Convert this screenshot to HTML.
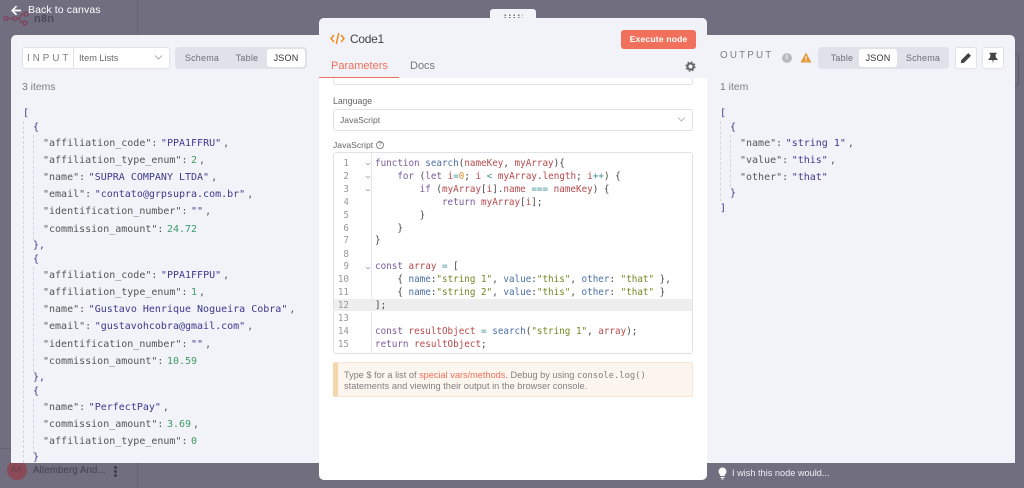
<!DOCTYPE html>
<html><head><meta charset="utf-8"><style>
*{box-sizing:border-box}
html,body{margin:0;padding:0;width:1024px;height:488px;overflow:hidden;background:#706e7f}
body{position:relative;font-family:"Liberation Sans",sans-serif;color:#555}
.a{position:absolute;white-space:nowrap}
.j{position:absolute;white-space:pre;font:10px/14px "DejaVu Sans Mono",monospace;color:#555;letter-spacing:0}
.s{color:#3b3a8f;margin:0 2px 0 -2.5px}.n{color:#3f9a68;margin:0 2px 0 -2.5px}.b{color:#3b3a8f}
.c{position:absolute;left:375px;white-space:pre;font:9.27px/13px "DejaVu Sans Mono",monospace;color:#444}
.l{position:absolute;left:333px;width:16px;text-align:right;white-space:pre;font:9.27px/13px "DejaVu Sans Mono",monospace;color:#999}
.k{color:#7a5a9e}.v{color:#b8484a}.f{color:#4a6ea5}.t{color:#6f8a20}.o{color:#d9922e}.p{color:#3f8f99}
.d{position:absolute;width:0;border-left:1px dashed #cdd6e0}
.seg{position:absolute;background:#dfe2e9;border-radius:4px;height:22px;top:47px}
.seg span{position:absolute;top:3px;height:16px;font-size:9px;line-height:16px;text-align:center;color:#6f6f78;letter-spacing:.2px}
.seg .on{background:#fff;border-radius:3px;color:#333;top:2px;height:18px;line-height:18px}
.fold{position:absolute;left:365px;width:6px;height:6px}
</style></head><body>

<!-- background canvas bits -->
<div class="a" style="left:137px;top:0;width:1px;height:488px;background:#666474"></div>
<div class="a" style="left:0;top:448px;width:137px;height:1px;background:#666474"></div>
<div class="a" style="left:1015px;top:53px;width:4px;height:33px;border:1px solid #5c5a6a;border-left:0;border-radius:0 3px 3px 0"></div>

<svg class="a" style="left:2px;top:8px" width="30" height="20" viewBox="0 0 30 20" fill="none" stroke="#7d4a63" stroke-width="1.6">
<circle cx="4" cy="10.500" r="2"/><circle cx="13" cy="10.500" r="2"/><circle cx="24" cy="6" r="2"/><circle cx="23" cy="15" r="2"/>
<path d="M6 10.500h5M15 10.500h1.500c2 0 1.500-4.500 5.500-4.500M16.500 10.500c2 0 1 4.500 4.500 4.500"/></svg>
<div class="a" style="left:34px;top:13px;font-size:11px;font-weight:bold;color:#4c4a58;letter-spacing:.3px">n8n</div>
<svg class="a" style="left:10px;top:4px" width="13" height="13" viewBox="0 0 13 13" fill="none" stroke="#fff" stroke-width="1.700"><path d="M11 6.500H2.500M6.500 2.200L2.200 6.500l4.300 4.300"/></svg>
<div class="a" style="left:28px;top:4px;font-size:10.500px;line-height:13px;color:#fff;letter-spacing:.1px">Back to canvas</div>

<div class="a" style="left:7px;top:460px;width:20px;height:20px;border-radius:50%;background:#8a4a58"></div>
<div class="a" style="left:11px;top:465px;font-size:8px;color:#6d3a48">AA</div>
<div class="a" style="left:33px;top:465px;font-size:9.800px;color:#45434f">Altemberg And...</div>
<div class="a" style="left:114px;top:466px;width:3px;height:3px;border-radius:50%;background:#3d3b47;box-shadow:0 4px 0 #3d3b47,0 8px 0 #3d3b47"></div>

<svg class="a" style="left:717px;top:467px" width="11" height="13" viewBox="0 0 11 13" fill="#fff"><path d="M5.500.500a4 4 0 0 0-2.300 7.200V9h4.600V7.700A4 4 0 0 0 5.500.500zM3.600 10h3.800v1H3.600zM4.400 11.500h2.200v1H4.400z"/></svg>
<div class="a" style="left:732px;top:467px;font-size:9.200px;line-height:13px;color:#f0f0f4">I wish this node would...</div>

<!-- LEFT PANEL -->
<div class="a" style="left:11px;top:35px;width:320px;height:428px;background:#f2f3f8;border-radius:5px 0 0 0"></div>
<div class="a" style="left:22px;top:47px;width:148px;height:22px;background:#fff;border:1px solid #dfe2e9;border-radius:3px"></div>
<div class="a" style="left:73px;top:48px;width:1px;height:20px;background:#dfe2e9"></div>
<div class="a" style="left:27px;top:52px;font-size:9.800px;line-height:14px;letter-spacing:3px;color:#7c7c85;background:transparent">INPUT</div>
<div class="a" style="left:79px;top:51px;font-size:9.200px;line-height:14px;color:#666">Item Lists</div>
<svg class="a" style="left:154px;top:54px" width="9" height="7" viewBox="0 0 9 7" fill="none" stroke="#999" stroke-width=".8"><path d="M1 1.500l3.500 3.500L8 1.500"/></svg>
<div class="seg" style="left:175px;width:132px"><span style="left:4px;width:46px">Schema</span><span style="left:50px;width:44px">Table</span><span class="on" style="left:92px;width:38px">JSON</span></div>
<div class="a" style="left:22px;top:81px;font-size:10.400px;line-height:14px;color:#7c7c85">3 items</div>

<div class="d" style="left:23px;top:121px;height:342px"></div>
<div class="d" style="left:33px;top:135px;height:105px"></div>
<div class="d" style="left:33px;top:267px;height:105px"></div>
<div class="d" style="left:33px;top:399px;height:55px"></div>

<div class="j b" style="left:23px;top:107px">[</div>
<div class="j b" style="left:33px;top:121px">{</div>
<div class="j" style="left:43px;top:137px">"affiliation_code": <span class="s">"PPA1FFRU"</span>,</div>
<div class="j" style="left:43px;top:154px">"affiliation_type_enum": <span class="n">2</span>,</div>
<div class="j" style="left:43px;top:171px">"name": <span class="s">"SUPRA COMPANY LTDA"</span>,</div>
<div class="j" style="left:43px;top:188px">"email": <span class="s">"contato@grpsupra.com.br"</span>,</div>
<div class="j" style="left:43px;top:205px">"identification_number": <span class="s">""</span>,</div>
<div class="j" style="left:43px;top:223px">"commission_amount": <span class="n">24.72</span></div>
<div class="j b" style="left:33px;top:239px">},</div>
<div class="j b" style="left:33px;top:253px">{</div>
<div class="j" style="left:43px;top:269px">"affiliation_code": <span class="s">"PPA1FFPU"</span>,</div>
<div class="j" style="left:43px;top:286px">"affiliation_type_enum": <span class="n">1</span>,</div>
<div class="j" style="left:43px;top:303px">"name": <span class="s">"Gustavo Henrique Nogueira Cobra"</span>,</div>
<div class="j" style="left:43px;top:320px">"email": <span class="s">"gustavohcobra@gmail.com"</span>,</div>
<div class="j" style="left:43px;top:338px">"identification_number": <span class="s">""</span>,</div>
<div class="j" style="left:43px;top:355px">"commission_amount": <span class="n">10.59</span></div>
<div class="j b" style="left:33px;top:371px">},</div>
<div class="j b" style="left:33px;top:385px">{</div>
<div class="j" style="left:43px;top:401px">"name": <span class="s">"PerfectPay"</span>,</div>
<div class="j" style="left:43px;top:418px">"commission_amount": <span class="n">3.69</span>,</div>
<div class="j" style="left:43px;top:435px">"affiliation_type_enum": <span class="n">0</span></div>
<div class="j b" style="left:33px;top:451px;height:12px;overflow:hidden">}</div>

<!-- RIGHT PANEL -->
<div class="a" style="left:700px;top:35px;width:315px;height:428px;background:#f2f3f8;border-radius:0 5px 0 0"></div>
<div class="a" style="left:720px;top:49px;font-size:9.800px;line-height:14px;letter-spacing:2.200px;color:#7c7c85">OUTPUT</div>
<div class="a" style="left:782px;top:53px;width:10px;height:10px;border-radius:50%;background:#b9b9c0;color:#fff;font-size:7px;line-height:10px;text-align:center;font-weight:bold">i</div>
<svg class="a" style="left:800px;top:52px" width="12" height="11" viewBox="0 0 12 11"><path d="M6 .500L11.500 10.500H.500z" fill="#e39a3d"/><path d="M6 4v3.500M6 8.300v1" stroke="#fff" stroke-width="1"/></svg>
<div class="seg" style="left:818px;width:131px"><span style="left:4px;width:40px">Table</span><span class="on" style="left:41px;width:38px">JSON</span><span style="left:81px;width:48px">Schema</span></div>
<div class="a" style="left:955px;top:47px;width:22px;height:22px;background:#fff;border:1px solid #dfe2e9;border-radius:3px"></div>
<div class="a" style="left:982px;top:47px;width:22px;height:22px;background:#fff;border:1px solid #dfe2e9;border-radius:3px"></div>
<svg class="a" style="left:960px;top:52px" width="12" height="12" viewBox="0 0 12 12" fill="#444"><path d="M8.300 1L11 3.700 4 10.700.800 11.200 1.300 8z"/></svg>
<svg class="a" style="left:987px;top:52px" width="12" height="12" viewBox="0 0 12 12" fill="#444"><path d="M2.500.800h7v1.400H8.500l.4 3.300 1.600 1.500v1H6.600L6 11.500 5.400 8H1.500V7l1.600-1.500.4-3.300h-1z"/></svg>
<div class="a" style="left:720px;top:81px;font-size:10.400px;line-height:14px;color:#7c7c85">1 item</div>

<div class="d" style="left:720px;top:121px;height:80px;border-color:#d5d6da"></div>
<div class="d" style="left:730px;top:135px;height:52px;border-color:#d5d6da"></div>
<div class="j b" style="left:720px;top:107px">[</div>
<div class="j b" style="left:730px;top:121px">{</div>
<div class="j" style="left:740px;top:137px">"name": <span class="s">"string 1"</span>,</div>
<div class="j" style="left:740px;top:154px">"value": <span class="s">"this"</span>,</div>
<div class="j" style="left:740px;top:171px">"other": <span class="s">"that"</span></div>
<div class="j b" style="left:730px;top:187px">}</div>
<div class="j b" style="left:720px;top:202px">]</div>

<!-- CENTER PANEL -->
<div class="a" style="left:490px;top:9px;width:46px;height:12px;background:#f2f3f8;border-radius:3px 3px 0 0"></div>
<div class="a" style="left:503px;top:14px;width:20px;height:5px;background:radial-gradient(circle,#777 .7px,transparent 1px) 0 0/4.500px 2.500px"></div>
<div class="a" style="left:319px;top:18px;width:388px;height:462px;background:#fff;border-radius:5px"></div>
<div class="a" style="left:319px;top:18px;width:388px;height:60px;background:#f2f3f8;border-radius:5px 5px 0 0"></div>
<svg class="a" style="left:330px;top:32px" width="15" height="13" viewBox="0 0 15 13" fill="none" stroke="#ee8a1f" stroke-width="1.500"><path d="M4 3L1 6.500 4 10M11 3l3 3.500L11 10M8.700 1L6.300 12"/></svg>
<div class="a" style="left:350px;top:31px;font-size:12px;line-height:17px;color:#444;letter-spacing:-.3px">Code1</div>
<div class="a" style="left:621px;top:30px;width:75px;height:19px;background:#f0705b;border-radius:3px;color:#fff;font-size:8.700px;line-height:19px;text-align:center;font-weight:bold;letter-spacing:.1px">Execute node</div>
<div class="a" style="left:331px;top:58px;font-size:11px;line-height:16px;color:#f0705b">Parameters</div>
<div class="a" style="left:319px;top:76.500px;width:80px;height:1.500px;background:#f0705b"></div>
<div class="a" style="left:410px;top:58px;font-size:11px;line-height:16px;color:#777">Docs</div>
<svg class="a" style="left:685px;top:61px" width="11" height="11" viewBox="0 0 11 11"><circle cx="5.500" cy="5.500" r="3" fill="none" stroke="#666" stroke-width="2"/><circle cx="5.500" cy="5.500" r="4.300" fill="none" stroke="#666" stroke-width="1.600" stroke-dasharray="1.700 1.700"/></svg>

<div class="a" style="left:333px;top:78px;width:360px;height:7px;border:1px solid #dfe2e9;border-top:0;border-radius:0 0 3px 3px"></div>
<div class="a" style="left:333px;top:94px;font-size:8.800px;line-height:14px;color:#666">Language</div>
<div class="a" style="left:333px;top:109px;width:360px;height:22px;border:1px solid #dfe2e9;border-radius:3px"></div>
<div class="a" style="left:340px;top:113px;font-size:8.600px;line-height:14px;color:#666">JavaScript</div>
<svg class="a" style="left:677px;top:116px" width="9" height="7" viewBox="0 0 9 7" fill="none" stroke="#aaa" stroke-width=".8"><path d="M1 1.500l3.500 3.500L8 1.500"/></svg>
<div class="a" style="left:333px;top:138px;font-size:8.600px;line-height:14px;color:#666">JavaScript</div>
<div class="a" style="left:376px;top:141px;width:8px;height:8px;border:1.300px solid #888;border-radius:50%;color:#888;font-size:6px;line-height:6px;text-align:center;font-weight:bold">?</div>

<div class="a" style="left:333px;top:152px;width:360px;height:202px;border:1px solid #dfe2e9;border-radius:3px"></div>
<div class="a" style="left:371px;top:153px;width:1px;height:200px;background:#e4e6ec"></div>
<div class="a" style="left:334px;top:299px;width:358px;height:12px;background:#eeeeef"></div>

<div class="l" style="top:157px">1</div><div class="l" style="top:170px">2</div><div class="l" style="top:183px">3</div><div class="l" style="top:196px">4</div><div class="l" style="top:209px">5</div><div class="l" style="top:222px">6</div><div class="l" style="top:234px">7</div><div class="l" style="top:248px">8</div><div class="l" style="top:260px">9</div><div class="l" style="top:273px">10</div><div class="l" style="top:286px">11</div><div class="l" style="top:299px">12</div><div class="l" style="top:312px">13</div><div class="l" style="top:325px">14</div><div class="l" style="top:338px">15</div>

<svg class="fold" style="top:161px" viewBox="0 0 6 6" fill="none" stroke="#999" stroke-width=".7"><path d="M1 2l2 2 2-2"/></svg>
<svg class="fold" style="top:174px" viewBox="0 0 6 6" fill="none" stroke="#999" stroke-width=".7"><path d="M1 2l2 2 2-2"/></svg>
<svg class="fold" style="top:187px" viewBox="0 0 6 6" fill="none" stroke="#999" stroke-width=".7"><path d="M1 2l2 2 2-2"/></svg>
<svg class="fold" style="top:265px" viewBox="0 0 6 6" fill="none" stroke="#999" stroke-width=".7"><path d="M1 2l2 2 2-2"/></svg>

<div class="c" style="top:157px"><span class="k">function</span> <span class="f">search</span>(<span class="v">nameKey</span>, <span class="v">myArray</span>){</div>
<div class="c" style="top:170px">    <span class="k">for</span> (<span class="k">let</span> <span class="v">i</span><span class="p">=</span><span class="o">0</span>; <span class="v">i</span> <span class="p">&lt;</span> <span class="v">myArray</span>.<span class="v">length</span>; <span class="v">i</span><span class="p">++</span>) {</div>
<div class="c" style="top:183px">        <span class="k">if</span> (<span class="v">myArray</span>[<span class="v">i</span>].<span class="v">name</span> <span class="p">===</span> <span class="v">nameKey</span>) {</div>
<div class="c" style="top:196px">            <span class="k">return</span> <span class="v">myArray</span>[<span class="v">i</span>];</div>
<div class="c" style="top:209px">        }</div>
<div class="c" style="top:222px">    }</div>
<div class="c" style="top:234px">}</div>
<div class="c" style="top:260px"><span class="k">const</span> <span class="v">array</span> <span class="p">=</span> [</div>
<div class="c" style="top:273px">    { <span class="f">name</span>:<span class="t">"string 1"</span>, <span class="f">value</span>:<span class="t">"this"</span>, <span class="f">other</span>: <span class="t">"that"</span> },</div>
<div class="c" style="top:286px">    { <span class="f">name</span>:<span class="t">"string 2"</span>, <span class="f">value</span>:<span class="t">"this"</span>, <span class="f">other</span>: <span class="t">"that"</span> }</div>
<div class="c" style="top:299px">];</div>
<div class="c" style="top:325px"><span class="k">const</span> <span class="v">resultObject</span> <span class="p">=</span> <span class="f">search</span>(<span class="t">"string 1"</span>, <span class="v">array</span>);</div>
<div class="c" style="top:338px"><span class="k">return</span> <span class="v">resultObject</span>;</div>

<div class="a" style="left:333px;top:362px;width:360px;height:35px;background:#fdf6ef;border:1px solid #f6e6d2;border-left:5px solid #f3d6aa;border-radius:2px"></div>
<div class="a" style="left:344px;top:370px;font-size:9.200px;line-height:11px;color:#808080">Type $ for a list of <span style="color:#f0705b">special vars/methods</span>. Debug by using <span style="font-family:'DejaVu Sans Mono',monospace;font-size:8.800px">console.log()</span></div>
<div class="a" style="left:344px;top:381px;font-size:9.250px;line-height:11px;color:#808080">statements and viewing their output in the browser console.</div>

</body></html>
